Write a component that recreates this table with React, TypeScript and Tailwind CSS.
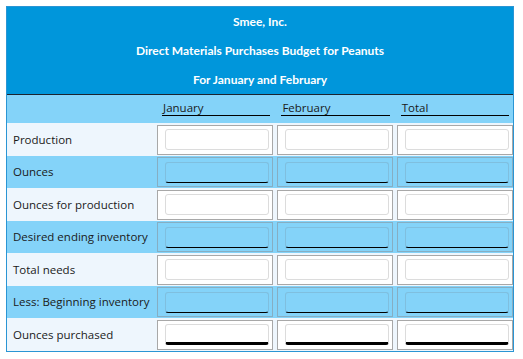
import React from 'react';

const rows = [
  { label: 'Production', kind: 'plain' },
  { label: 'Ounces', kind: 'line' },
  { label: 'Ounces for production', kind: 'plain' },
  { label: 'Desired ending inventory', kind: 'line' },
  { label: 'Total needs', kind: 'plain' },
  { label: 'Less: Beginning inventory', kind: 'line' },
  { label: 'Ounces purchased', kind: 'total' },
];

function Cell({ kind }: { kind: string }) {
  if (kind === 'line') {
    return (
      <div className="w-[116px] h-[30px] border border-[#86aec3] bg-[#84d3f9] flex items-center">
        <div className="ml-[7px] w-[104px] h-[21px] rounded-[3px] border border-[#7fbfdf] border-b-black bg-[#84d3f9]" />
      </div>
    );
  }
  return (
    <div className="w-[116px] h-[30px] border border-[#a8a8a8] bg-white flex items-center">
      <div
        className={
          kind === 'total'
            ? 'ml-[7px] w-[104px] h-[21px] rounded-[3px] border border-[#dcdcdc] border-b-[3px] border-b-black bg-white'
            : 'ml-[7px] w-[104px] h-[21px] rounded-[3px] border border-[#dcdcdc] bg-white'
        }
      />
    </div>
  );
}

export default function App() {
  return (
    <div className="w-[523px] h-[359px] bg-white pt-[6px] pl-[6px] font-['Open_Sans',sans-serif]">
      <div className="w-[508px] border border-[#2a95d4]">
        <div className="bg-[#0096db] border-b border-[#1b2430] text-white font-bold text-[12px] font-['Lato',sans-serif] text-center">
          <div className="h-[29px] flex items-center justify-center">Smee, Inc.</div>
          <div className="h-[29px] flex items-center justify-center">Direct Materials Purchases Budget for Peanuts</div>
          <div className="h-[29px] flex items-center justify-center">For January and February</div>
        </div>

        <div className="h-[28px] bg-[#84d3f9] flex text-[11.5px] text-[#1a1a1a]">
          <div className="w-[153px]" />
          {['January', 'February', 'Total'].map((h, i) => (
            <div key={h} className={i < 2 ? 'w-[116px] mr-[4px]' : 'w-[116px]'}>
              <div className="mt-[6px] ml-[3px] mr-[4px] h-[15px] leading-[14px] border-b border-black pl-[1px]">{h}</div>
            </div>
          ))}
        </div>

        {rows.map((r, i) => (
          <div
            key={r.label}
            className={
              (r.kind === 'line' ? 'bg-[#84d3f9] ' : 'bg-[#eef6fd] ') +
              (i % 2 === 0 ? 'h-[33px] ' : 'h-[32px] ') +
              'flex items-center'
            }
          >
            <div className="w-[150px] pl-[6px] text-[11.5px] text-[#1a1a1a]">{r.label}</div>
            <div className="flex gap-[4px]">
              <Cell kind={r.kind} />
              <Cell kind={r.kind} />
              <Cell kind={r.kind} />
            </div>
          </div>
        ))}
      </div>
    </div>
  );
}
